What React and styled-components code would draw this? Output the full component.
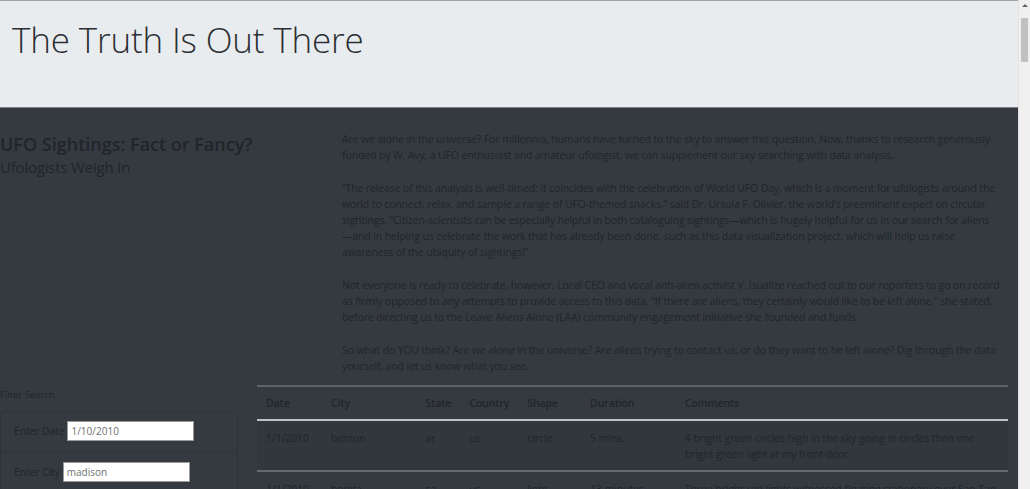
import React from 'react';
import styled, { createGlobalStyle } from 'styled-components';

const GlobalStyle = createGlobalStyle`
  html, body {
    margin: 0;
    padding: 0;
    background: #343a40;
    overflow: hidden;
  }
  body {
    font-family: "Open Sans", "Noto Sans", sans-serif;
    color: #212529;
  }
`;

const Page = styled.div`
  margin-right: 12px;
  min-height: 100vh;
  background: #343a40;
`;

const Scrollbar = styled.div`
  position: fixed;
  top: 0;
  right: 0;
  bottom: 0;
  width: 12px;
  background: #f0f0f0;
  border-left: 1px solid #e4e4e4;
  box-sizing: border-box;
`;

const ScrollArrow = styled.div`
  position: absolute;
  left: 3px;
  top: 4px;
  width: 0;
  height: 0;
  border-left: 3px solid transparent;
  border-right: 3px solid transparent;
  border-bottom: 3px solid #606060;
`;

const ScrollThumb = styled.div`
  position: absolute;
  left: 2px;
  right: 2px;
  top: 18px;
  height: 44px;
  background: #c1c1c1;
`;

const Jumbotron = styled.header`
  background: #e9ecef;
  border-top: 1px solid #a3a5a8;
  border-bottom: 1px solid #7d8084;
  height: 108px;
  box-sizing: border-box;
  padding: 14px 12px 0;
`;

const Title = styled.h1`
  margin: 0;
  font-weight: 300;
  font-size: 35px;
  letter-spacing: -0.15px;
  line-height: 50px;
  color: #2b2f33;
`;

const DarkSection = styled.main`
  background: #343a40;
  padding: 23px 10px 0 0;
`;

const IntroRow = styled.section`
  display: grid;
  grid-template-columns: 342px 1fr;
`;

const IntroAside = styled.div`
  display: flex;
  flex-direction: column;
  padding-top: 2px;
`;

const Heading = styled.h2`
  margin: 0;
  font-size: 18px;
  font-weight: 600;
  line-height: 22px;
`;

const SubHeading = styled.h4`
  margin: 0;
  font-size: 15px;
  font-weight: 400;
  letter-spacing: -0.2px;
  line-height: 24px;
`;

const Article = styled.article`
  font-size: 10.5px;
  line-height: 16px;
  letter-spacing: -0.13px;
  padding-right: 4px;
`;

const Paragraph = styled.p`
  margin: 0 0 17px;
`;

const NoWrap = styled.span`
  white-space: nowrap;
`;

const DataRow = styled.section`
  display: grid;
  grid-template-columns: 257px 1fr;
  margin-top: -6px;
`;

const FilterCol = styled.div`
  padding-top: 4px;
`;

const FilterLabel = styled.div`
  font-size: 9.5px;
  line-height: 12px;
  margin-bottom: 10px;
`;

const FilterList = styled.ul`
  list-style: none;
  margin: 0;
  padding: 0;
  width: 236px;
  border: 1px solid #2e3338;
  border-radius: 4px;
`;

const FilterItem = styled.li`
  display: flex;
  align-items: center;
  height: 40px;
  box-sizing: border-box;
  padding: 0 13px 2px;
  font-size: 10.2px;
  & + & {
    border-top: 1px solid #2e3338;
    height: 41px;
  }
`;

const FilterInput = styled.input`
  width: ${props => props.w}px;
  height: 20px;
  box-sizing: border-box;
  margin-left: 3px;
  padding: 0 3px;
  border: 1px solid #9a9a9a;
  background: #fff;
  color: #6f6f6f;
  font-family: "Open Sans", sans-serif;
  font-size: 10px;
  outline: none;
`;

const Table = styled.table`
  width: 751px;
  border-collapse: collapse;
  font-size: 10.5px;
  letter-spacing: -0.1px;
  line-height: 16px;
  border-top: 2px solid #5c6268;
`;

const HeadCell = styled.th`
  text-align: left;
  font-weight: 600;
  padding: 8px 9px;
  width: ${props => props.w}px;
  border-bottom: 2px solid #bfc2c5;
`;

const Row = styled.tr`
  background: ${props => (props.odd ? 'rgba(0, 0, 0, 0.045)' : 'transparent')};
  border-bottom: 2px solid #656a70;
`;

const Cell = styled.td`
  vertical-align: top;
  padding: 9px 9px 8px;
`;

const columns = [
  ['Date', 47],
  ['City', 77],
  ['State', 24],
  ['Country', 38],
  ['Shape', 45],
  ['Duration', 77],
  ['Comments', 317],
];

const sightings = [
  ['1/1/2010', 'benton', 'ar', 'us', 'circle', '5 mins.', '4 bright green circles high in the sky going in circles then one bright green light at my front door.'],
  ['1/1/2010', 'bonita', 'ca', 'us', 'light', '13 minutes', 'Three bright red lights witnessed floating stationary over San Tan Mountains on New Years Eve.'],
];

const App = () => (
  <>
    <GlobalStyle />
    <Page>
      <Jumbotron>
        <Title>The Truth Is Out There</Title>
      </Jumbotron>
      <DarkSection>
        <IntroRow>
          <IntroAside>
            <Heading>UFO Sightings: Fact or Fancy?</Heading>
            <SubHeading>Ufologists Weigh In</SubHeading>
          </IntroAside>
          <Article>
            <Paragraph>
              Are we alone in the universe? For millennia, humans have turned to the sky to answer this question. Now, thanks to research generously funded by W. Avy, a UFO enthusiast and amateur ufologist, we can supplement our sky searching with data analysis.
            </Paragraph>
            <Paragraph>
              “The release of this analysis is well-timed: it coincides with the celebration of World UFO Day, which is a moment for ufologists around the world to connect, relax, and sample a range of UFO-themed snacks,” said Dr. Ursula F. Olivier, the world’s preeminent expert on circular sightings. “Citizen-scientists can be especially helpful in both cataloguing sightings—which is hugely helpful for us in our search for aliens<NoWrap>—and</NoWrap> in helping us celebrate the work that has already been done, such as this data visualization project, which will help us raise awareness of the ubiquity of sightings!”
            </Paragraph>
            <Paragraph>
              Not everyone is ready to celebrate, however. Local CEO and vocal anti-alien activist V. Isualize reached out to our reporters to go on record as firmly opposed to any attempts to provide access to this data. “If there are aliens, they certainly would like to be left alone,” she stated, before directing us to the Leave Aliens Alone (LAA) community engagement initiative she founded and funds.
            </Paragraph>
            <Paragraph>
              So what do YOU think? Are we alone in the universe? Are aliens trying to contact us, or do they want to be left alone? Dig through the data yourself, and let us know what you see.
            </Paragraph>
          </Article>
        </IntroRow>
        <DataRow>
          <FilterCol>
            <FilterLabel>Filter Search</FilterLabel>
            <FilterList>
              <FilterItem>
                <label htmlFor="datetime">Enter Date</label>
                <FilterInput id="datetime" w={127} defaultValue="1/10/2010" />
              </FilterItem>
              <FilterItem>
                <label htmlFor="city">Enter City</label>
                <FilterInput id="city" w={127} defaultValue="madison" />
              </FilterItem>
            </FilterList>
          </FilterCol>
          <div>
            <Table>
              <thead>
                <tr>
                  {columns.map(([name, w]) => (
                    <HeadCell key={name} w={w}>{name}</HeadCell>
                  ))}
                </tr>
              </thead>
              <tbody>
                {sightings.map((r, i) => (
                  <Row key={i} odd={i % 2 === 0}>
                    {r.map((v, j) => (
                      <Cell key={j}>{v}</Cell>
                    ))}
                  </Row>
                ))}
              </tbody>
            </Table>
          </div>
        </DataRow>
      </DarkSection>
    </Page>
    <Scrollbar>
      <ScrollArrow />
      <ScrollThumb />
    </Scrollbar>
  </>
);

export default App;
